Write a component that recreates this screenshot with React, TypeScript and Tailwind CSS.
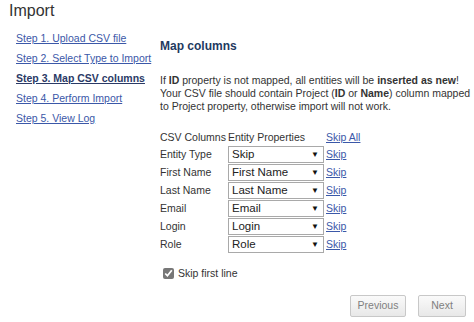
const steps = [
  { label: "Step 1. Upload CSV file", active: false },
  { label: "Step 2. Select Type to Import", active: false },
  { label: "Step 3. Map CSV columns", active: true },
  { label: "Step 4. Perform Import", active: false },
  { label: "Step 5. View Log", active: false },
];

const rows = [
  { column: "Entity Type", value: "Skip" },
  { column: "First Name", value: "First Name" },
  { column: "Last Name", value: "Last Name" },
  { column: "Email", value: "Email" },
  { column: "Login", value: "Login" },
  { column: "Role", value: "Role" },
];

const FakeSelect = ({ value }: { value: string }) => (
  <div className="flex h-[17px] w-[96px] items-center justify-between border border-[#a9a9a9] bg-white pl-[3px] pr-[4px] text-[11.5px] leading-none text-[#222]">
    <span>{value}</span>
    <span className="text-[8px] text-[#111]">▼</span>
  </div>
);

export default function App() {
  return (
    <div className="h-[322px] w-[474px] overflow-hidden bg-white font-['Liberation_Sans',Arial,sans-serif] text-[10.5px] text-[#333]">
      <h1 className="pl-[9px] pt-[1px] text-[16px] leading-[20px] text-[#333]">Import</h1>
      <div className="flex">
        {/* wizard steps */}
        <nav className="flex w-[160px] flex-col gap-[6px] pl-[16px] pt-[10px]">
          {steps.map((s) => (
            <a
              key={s.label}
              href="#"
              className={
                s.active
                  ? "whitespace-nowrap text-[10.5px] font-bold leading-[14px] text-[#2a3a66] underline"
                  : "whitespace-nowrap text-[10.5px] leading-[14px] text-[#3b58a8] underline"
              }
            >
              {s.label}
            </a>
          ))}
        </nav>

        <div className="flex flex-1 flex-col pt-[18px]">
          <h2 className="text-[12px] font-bold leading-[14px] text-[#1f3a5f]">Map columns</h2>
          <p className="mt-[21px] whitespace-nowrap leading-[13px]">
            If <b>ID</b> property is not mapped, all entities will be <b>inserted as new</b>!
            <br />
            Your CSV file should contain Project (<b>ID</b> or <b>Name</b>) column mapped
            <br />
            to Project property, otherwise import will not work.
          </p>

          <div className="mt-[18px] flex flex-col gap-[1px]">
            <div className="flex h-[14px] items-center whitespace-nowrap">
              <span className="w-[68px]">CSV Columns</span>
              <span className="w-[98px]">Entity Properties</span>
              <a href="#" className="text-[#3b58a8] underline">Skip All</a>
            </div>
            {rows.map((r) => (
              <div key={r.column} className="flex h-[17px] items-center whitespace-nowrap">
                <span className="w-[68px]">{r.column}</span>
                <FakeSelect value={r.value} />
                <a href="#" className="ml-[2px] text-[#3b58a8] underline">Skip</a>
              </div>
            ))}
          </div>

          <label className="mt-[13px] flex items-center gap-[4px] pl-[3px]">
            <input type="checkbox" defaultChecked className="m-0 h-[11px] w-[11px] accent-[#777]" />
            <span>Skip first line</span>
          </label>

          <div className="mt-[13px] flex justify-end gap-[12px] pr-[8px]">
            <button className="h-[22px] w-[56px] rounded-[2px] border border-[#c8c8c8] bg-gradient-to-b from-[#fafafa] to-[#e8e8e8] text-[10.5px] text-[#808080]">
              Previous
            </button>
            <button className="h-[22px] w-[48px] rounded-[2px] border border-[#c8c8c8] bg-gradient-to-b from-[#fafafa] to-[#e8e8e8] text-[10.5px] text-[#808080]">
              Next
            </button>
          </div>
        </div>
      </div>
    </div>
  );
}
